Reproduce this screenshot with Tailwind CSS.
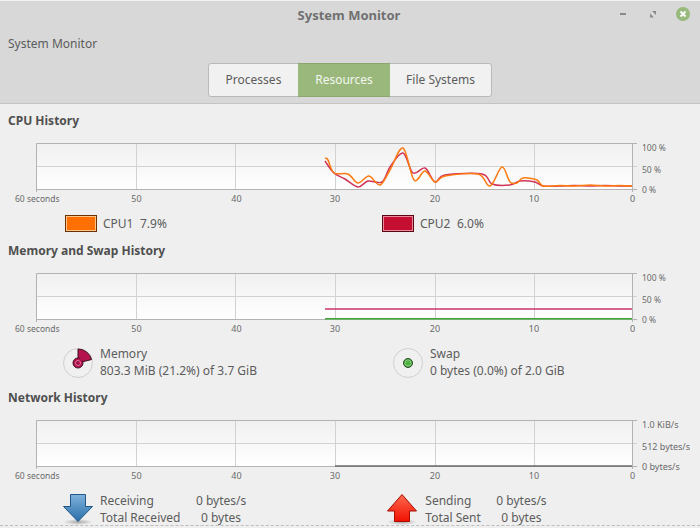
<!DOCTYPE html>
<html lang="en">
<head>
    <meta charset="UTF-8">
    <title>System Monitor</title>
    <script src="https://cdn.jsdelivr.net/npm/@tailwindcss/browser@4"></script>
</head>
<body class="bg-[#efefef] font-['Noto_Sans',sans-serif] text-[#5c5c5c] text-[12px] leading-[16px]">
<div class="w-[700px] h-[528px] overflow-hidden flex flex-col">

    <!-- header -->
    <div class="h-[104px] bg-[#d8d8d8] border-t border-t-[#f2f2f2] border-b border-b-[#c4c4c4] flex flex-col shrink-0">
        <div class="h-[27px] pr-[2px] relative flex items-center justify-center">
            <span class="font-bold text-[13px] text-[#707070]">System Monitor</span>
            <svg class="absolute left-[616px] top-[6px]" width="76" height="16" viewBox="0 0 76 16">
                <rect x="4" y="6" width="6" height="2" fill="#8a8a8a"/>
                <path d="M36 4h4v4zM34 6.5l0 4h4z" fill="#8a8a8a"/>
                <circle cx="67" cy="7" r="7" fill="#97b97b"/>
                <path d="M64.5 4.5l5 5M69.5 4.5l-5 5" stroke="#fff" stroke-width="2"/>
            </svg>
        </div>
        <div class="pl-2 h-[28px] mt-[2px] flex items-center">System Monitor</div>
        <div class="flex justify-center mt-[5px]">
            <div class="flex h-[34px] rounded-[3px] border border-[#b9b9b9] bg-[#f1f1f1]">
                <div class="w-[89px] flex items-center justify-center">Processes</div>
                <div class="w-[92px] -my-[1px] flex items-center justify-center bg-[#9ab87c] border-y border-[#8aa86d] text-[#f4f7f0]">Resources</div>
                <div class="w-[101px] flex items-center justify-center">File Systems</div>
            </div>
        </div>
    </div>

    <!-- shared gradient -->
    <svg width="0" height="0" class="absolute">
        <defs>
            <linearGradient id="plotBg" x1="0" y1="0" x2="0" y2="1">
                <stop offset="0" stop-color="#f0f0f0"/>
                <stop offset="1" stop-color="#ffffff"/>
            </linearGradient>
            <linearGradient id="downFill" x1="0" y1="0" x2="0" y2="1">
                <stop offset="0" stop-color="#7fb2dc"/>
                <stop offset="1" stop-color="#2a6ea8"/>
            </linearGradient>
            <linearGradient id="upFill" x1="0" y1="0" x2="0" y2="1">
                <stop offset="0" stop-color="#ff6a50"/>
                <stop offset="1" stop-color="#f01000"/>
            </linearGradient>
            <radialGradient id="arrowShadow">
                <stop offset="0" stop-color="#000" stop-opacity="0.3"/>
                <stop offset="1" stop-color="#000" stop-opacity="0"/>
            </radialGradient>
        </defs>
    </svg>

    <!-- CPU -->
    <h2 class="mt-[7px] pl-2 h-[20px] flex items-center font-bold text-[#4f4f4f]">CPU History</h2>
    <svg class="mt-[9px] shrink-0 fill-[#6a6a6a] text-[9px]" width="700" height="64" viewBox="0 0 700 64">
        <rect x="36.5" y="3.5" width="596" height="46" fill="url(#plotBg)"/>
        <g stroke="#d2d2d2" fill="none">
            <path d="M36.5 26.5H637M136.5 3.5V49.5M235.5 3.5V49.5M335.5 3.5V49.5M435.5 3.5V49.5M534.5 3.5V49.5"/>
        </g>
        <g stroke="#b3b3b3" fill="none">
            <path d="M36.5 52V3.5H637M632.5 3.5V52M36.5 49.5H637"/>
        </g>
        <path id="cpu2" fill="none" stroke="#c8123a" stroke-width="1.5" opacity="0.85"/>
        <path id="cpu1" fill="none" stroke="#ff7a10" stroke-width="1.5"/>
        <text x="15" y="62" class="text-[8.5px]">60 seconds</text>
        <g text-anchor="middle">
            <text x="136.5" y="62">50</text><text x="236.5" y="62">40</text><text x="335" y="62">30</text>
            <text x="435" y="62">20</text><text x="534" y="62">10</text><text x="632.5" y="62">0</text>
        </g>
        <g class="text-[8.5px]"><text x="642" y="11">100 %</text><text x="642" y="33">50 %</text><text x="642" y="53">0 %</text></g>
    </svg>
    <div class="mt-[11px] h-[17px] flex items-center">
        <div class="ml-[65px] w-[32px] h-[17px] border border-[#6b3200] bg-[#ff7000] shadow-[inset_0_0_0_1px_#ffc48c]"></div>
        <span class="ml-[6px] w-[37px]">CPU1</span><span class="w-[242px]">7.9%</span>
        <div class="w-[32px] h-[17px] border border-[#5a0614] bg-[#c40f32] shadow-[inset_0_0_0_1px_#e88a9c]"></div>
        <span class="ml-[6px] w-[37px]">CPU2</span><span>6.0%</span>
    </div>

    <!-- Memory -->
    <h2 class="mt-[9px] pl-2 h-[20px] flex items-center font-bold text-[#4f4f4f]">Memory and Swap History</h2>
    <svg class="mt-[9px] shrink-0 fill-[#6a6a6a] text-[9px]" width="700" height="64" viewBox="0 0 700 64">
        <rect x="36.5" y="3.5" width="596" height="46" fill="url(#plotBg)"/>
        <g stroke="#d2d2d2" fill="none">
            <path d="M36.5 26.5H637M136.5 3.5V49.5M235.5 3.5V49.5M335.5 3.5V49.5M435.5 3.5V49.5M534.5 3.5V49.5"/>
        </g>
        <g stroke="#b3b3b3" fill="none">
            <path d="M36.5 52V3.5H637M632.5 3.5V52M36.5 49.5H637"/>
        </g>
        <path d="M325 39H632" fill="none" stroke="#c8326a" stroke-width="1.5"/>
        <path d="M325 48.7H632" fill="none" stroke="#3fa535" stroke-width="1.5"/>
        <text x="15" y="62" class="text-[8.5px]">60 seconds</text>
        <g text-anchor="middle">
            <text x="136.5" y="62">50</text><text x="236.5" y="62">40</text><text x="335" y="62">30</text>
            <text x="435" y="62">20</text><text x="534" y="62">10</text><text x="632.5" y="62">0</text>
        </g>
        <g class="text-[8.5px]"><text x="642" y="11">100 %</text><text x="642" y="33">50 %</text><text x="642" y="53">0 %</text></g>
    </svg>
    <div class="mt-[13px] h-[31px] flex items-center">
        <svg class="ml-[62px] shrink-0" width="32" height="32" viewBox="0 0 32 32">
            <circle cx="16" cy="16" r="14.5" fill="#f0f0f0" stroke="#cfcfcf"/>
            <path d="M16 2A14 14 0 0 1 29.6 12.5L16 16Z" fill="#b4124c" stroke="#3d1020" stroke-width="1" stroke-linejoin="round"/>
            <circle cx="16" cy="16" r="5" fill="#b4124c" stroke="#3d1020" stroke-width="1"/>
            <path d="M16.2 11.5L27 10.5 17 15Z" fill="#b4124c"/>
            <circle cx="16" cy="16" r="2.5" fill="#a01044" stroke="#e070a0" stroke-width="1"/>
        </svg>
        <div class="ml-[6px] w-[292px]"><div class="mb-[1px]">Memory</div><div>803.3 MiB (21.2%) of 3.7 GiB</div></div>
        <svg class="shrink-0" width="32" height="32" viewBox="0 0 32 32">
            <circle cx="16" cy="16" r="14.5" fill="#f0f0f0" stroke="#cfcfcf"/>
            <circle cx="16" cy="16" r="4.5" fill="#4fb044" stroke="#2c4a28" stroke-width="1"/>
            <circle cx="16" cy="16" r="3" fill="none" stroke="#8fd488" stroke-width="0.7"/>
        </svg>
        <div class="ml-[6px]"><div class="mb-[1px]">Swap</div><div>0 bytes (0.0%) of 2.0 GiB</div></div>
    </div>

    <!-- Network -->
    <h2 class="mt-[10px] pl-2 h-[20px] flex items-center font-bold text-[#4f4f4f]">Network History</h2>
    <svg class="mt-[9px] shrink-0 fill-[#6a6a6a] text-[9px]" width="700" height="64" viewBox="0 0 700 64">
        <rect x="36.5" y="3.5" width="596" height="46" fill="url(#plotBg)"/>
        <g stroke="#d2d2d2" fill="none">
            <path d="M36.5 26.5H637M136.5 3.5V49.5M235.5 3.5V49.5M335.5 3.5V49.5M435.5 3.5V49.5M534.5 3.5V49.5"/>
        </g>
        <g stroke="#b3b3b3" fill="none">
            <path d="M36.5 52V3.5H637M632.5 3.5V52M36.5 49.5H637"/>
        </g>
        <path d="M335 49H632" fill="none" stroke="#6a6a6a" stroke-width="1.5"/>
        <text x="15" y="62" class="text-[8.5px]">60 seconds</text>
        <g text-anchor="middle">
            <text x="136.5" y="62">50</text><text x="236.5" y="62">40</text><text x="335" y="62">30</text>
            <text x="435" y="62">20</text><text x="534" y="62">10</text><text x="632.5" y="62">0</text>
        </g>
        <text x="642" y="11">1.0 KiB/s</text><text x="642" y="33">512 bytes/s</text><text x="642" y="53">0 bytes/s</text>
    </svg>
    <div class="mt-[9px] h-[36px] flex items-start border-b border-dashed border-[#bdbdbd] shrink-0">
        <svg class="ml-[62px] mt-[4px] shrink-0" width="32" height="32" viewBox="0 0 32 32">
            <ellipse cx="16" cy="28" rx="15" ry="3" fill="url(#arrowShadow)"/>
            <path d="M8.5 0.5H23.5V12.5H30.5L16 27.5 1.5 12.5H8.5Z" fill="url(#downFill)" stroke="#1f5788"/>
        </svg>
        <div class="ml-[6px] mt-[2px] leading-[17px]">
            <div class="flex"><span class="w-[96px]">Receiving</span><span>0 bytes/s</span></div>
            <div class="flex"><span class="w-[101px]">Total Received</span><span>0 bytes</span></div>
        </div>
        <svg class="ml-[140px] mt-[4px] shrink-0" width="32" height="32" viewBox="0 0 32 32">
            <ellipse cx="16" cy="28" rx="15" ry="3" fill="url(#arrowShadow)"/>
            <path d="M16 0.5L30.5 17H23.5V27.5H8.5V17H1.5Z" fill="url(#upFill)" stroke="#a80c00"/>
        </svg>
        <div class="ml-[7px] mt-[2px] leading-[17px]">
            <div class="flex"><span class="w-[71px]">Sending</span><span>0 bytes/s</span></div>
            <div class="flex"><span class="w-[76px]">Total Sent</span><span>0 bytes</span></div>
        </div>
    </div>
</div>

<script>
    // y values are local to the svg, which starts at page y=140
    const cpu1 = [[325,18],[328,20],[334,33],[348,34],[358,43],[369,36],[380,45],[390,30],[403,8],[414,40],[425,31],[435,42],[445,36],[478,34],[490,46],[502,27],[510,42],[517,43],[523,38],[537,40],[543,46],[560,45.5],[575,46],[590,45],[605,46],[620,45.5],[632,46]];
    const cpu2 = [[325,21],[334,33],[345,39],[358,47],[368,41],[382,42],[390,27],[403,13],[413,33],[425,28],[435,42],[445,35],[482,34],[492,44],[510,45],[520,41],[535,42],[543,46],[560,46],[575,45.5],[590,46],[605,45.5],[620,46],[632,46]];

    // catmull-rom through the points
    function smoothPath(pts) {
        let d = `M${pts[0][0]} ${pts[0][1]}`;
        for (let i = 0; i < pts.length - 1; i++) {
            const p0 = pts[Math.max(i - 1, 0)];
            const p1 = pts[i];
            const p2 = pts[i + 1];
            const p3 = pts[Math.min(i + 2, pts.length - 1)];
            const c1x = p1[0] + (p2[0] - p0[0]) / 6;
            const c1y = p1[1] + (p2[1] - p0[1]) / 6;
            const c2x = p2[0] - (p3[0] - p1[0]) / 6;
            const c2y = p2[1] - (p3[1] - p1[1]) / 6;
            d += `C${c1x} ${c1y} ${c2x} ${c2y} ${p2[0]} ${p2[1]}`;
        }
        return d;
    }

    document.getElementById('cpu1').setAttribute('d', smoothPath(cpu1));
    document.getElementById('cpu2').setAttribute('d', smoothPath(cpu2));
</script>
</body>
</html>
